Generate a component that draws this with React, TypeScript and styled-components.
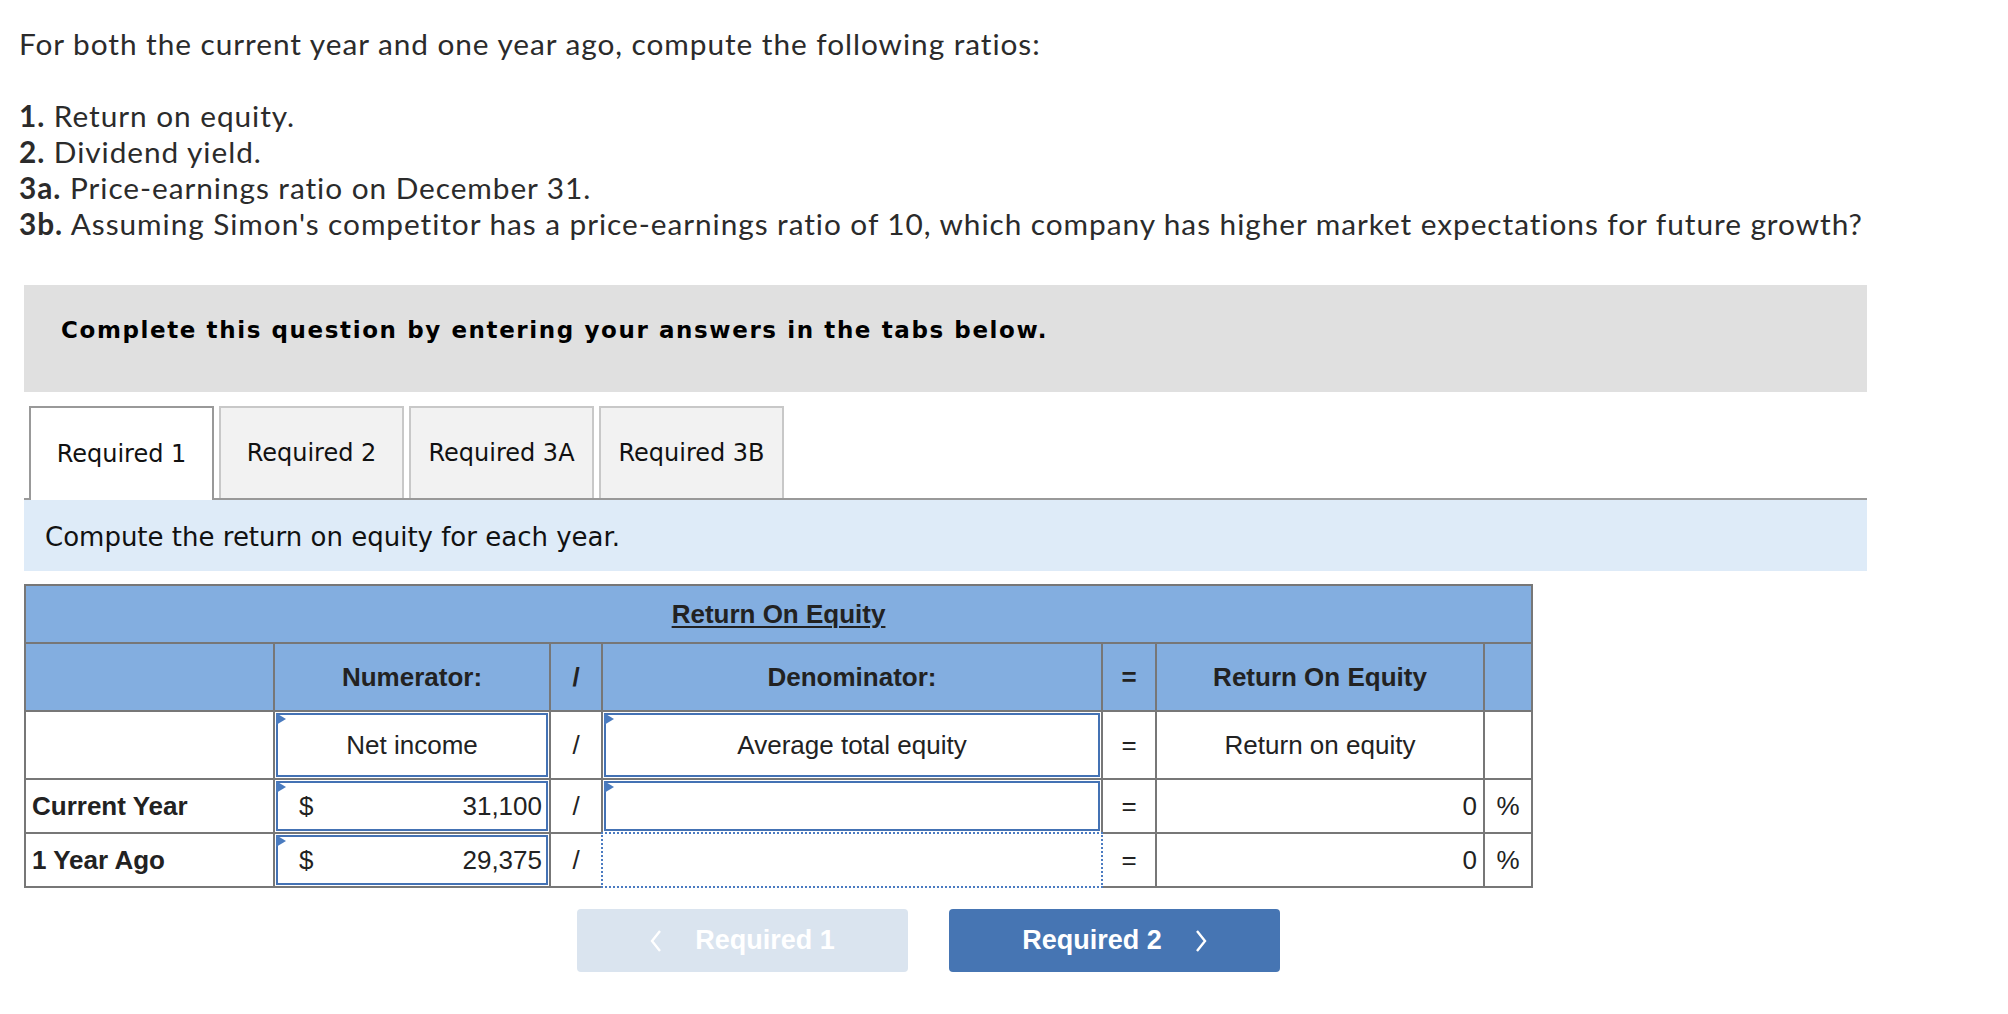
import styled, { createGlobalStyle } from 'styled-components'

const GlobalStyle = createGlobalStyle`
  html, body {
    margin: 0;
    padding: 0;
    background: #fff;
  }
  body {
    font-family: Lato, "Liberation Sans", sans-serif;
  }
`

const BLUE_EDGE = '#4472b4'
const GRID_LINE = '#777'

const Page = styled.div`
  padding: 26px 0 40px 19px;
`

const Prompt = styled.div`
  font-family: Lato, "Liberation Sans", sans-serif;
  font-size: 29.8px;
  line-height: 36px;
  letter-spacing: 0.95px;
  color: #2b2b2b;
`

const PromptLine = styled.p`
  margin: 0;
`

const Steps = styled.ol`
  list-style: none;
  margin: 36px 0 0;
  padding: 0;
`

const StepNo = styled.b`
  font-weight: 700;
`

const Work = styled.div`
  margin: 43px 0 0 5px;
  width: 1843px;
`

const Banner = styled.div`
  box-sizing: border-box;
  height: 107px;
  padding: 31px 37px 0;
  background: #e0e0e0;
  font: bold 23px/28px "DejaVu Sans", Verdana, sans-serif;
  letter-spacing: 1.6px;
  color: #000;
`

const TabBar = styled.div`
  display: flex;
  align-items: flex-start;
  gap: 5px;
  height: 92px;
  margin-top: 14px;
  padding-left: 5px;
  border-bottom: 2px solid #999;
`

const Tab = styled.button<{ $active?: boolean }>`
  box-sizing: border-box;
  width: 185px;
  height: ${(p) => (p.$active ? 94 : 92)}px;
  padding: 0;
  border: 2px solid ${(p) => (p.$active ? '#999' : '#c8c8c8')};
  border-bottom: none;
  background: ${(p) => (p.$active ? '#fff' : '#f2f2f2')};
  font: 24px "DejaVu Sans", Verdana, sans-serif;
  color: #111;
  cursor: pointer;
`

const Instruction = styled.div`
  box-sizing: border-box;
  height: 71px;
  padding: 22px 21px 0;
  background: #deebf8;
  font: 26px/30px "DejaVu Sans", Verdana, sans-serif;
  color: #111;
`

const Grid = styled.table`
  margin-top: 13px;
  border-collapse: collapse;
  table-layout: fixed;
  width: 1507px;
  font-family: "Liberation Sans", Arial, sans-serif;
  font-size: 26px;
  color: #222;
`

const Row = styled.tr<{ $h: number }>`
  height: ${(p) => p.$h}px;
`

const Cell = styled.td<{ $align?: 'left' | 'center' | 'right'; $head?: boolean; $bold?: boolean }>`
  position: relative;
  padding: 0 6px;
  border: 2px solid ${GRID_LINE};
  background: ${(p) => (p.$head ? '#83aee0' : '#fff')};
  text-align: ${(p) => p.$align ?? 'center'};
  font-weight: ${(p) => (p.$bold || p.$head ? 700 : 400)};
  vertical-align: middle;
  white-space: nowrap;
`

const InputCell = styled.td`
  position: relative;
  padding: 1px;
  border: 2px solid ${GRID_LINE};
  background: #fff;
  vertical-align: top;
`

const Title = styled.span`
  text-decoration: underline;
  text-underline-offset: 3px;
  text-decoration-thickness: 2px;
`

const Field = styled.div<{ $h: number; $align?: 'center' | 'split' }>`
  position: relative;
  box-sizing: border-box;
  height: ${(p) => p.$h}px;
  border: 2px solid ${BLUE_EDGE};
  display: flex;
  align-items: center;
  justify-content: ${(p) => (p.$align === 'split' ? 'space-between' : 'center')};
  padding: ${(p) => (p.$align === 'split' ? '0 4px 0 21px' : '0 8px')};
  white-space: nowrap;
`

const Flag = styled.span`
  position: absolute;
  top: -2px;
  left: -2px;
  width: 0;
  height: 0;
  border-top: 6.5px solid transparent;
  border-bottom: 6.5px solid transparent;
  border-left: 10px solid #4a7bbf;
`

const FocusRing = styled.div`
  position: absolute;
  top: -2px;
  right: -2px;
  bottom: -2px;
  left: -2px;
  border: 2px dotted #4b7bc1;
  background: #fff;
`

const Nav = styled.div`
  display: flex;
  justify-content: center;
  gap: 41px;
  margin-top: 21px;
  padding-right: 34px;
`

const NavButton = styled.button<{ $primary?: boolean }>`
  display: flex;
  align-items: center;
  justify-content: center;
  gap: 33px;
  width: 331px;
  height: 63px;
  padding: 0;
  border: none;
  border-radius: 4px;
  background: ${(p) => (p.$primary ? '#4675b3' : '#dae4ef')};
  color: #fff;
  font: bold 27px "Liberation Sans", Arial, sans-serif;
  cursor: ${(p) => (p.$primary ? 'pointer' : 'default')};
`

function Chevron({ dir }: { dir: 'left' | 'right' }) {
  const pts = dir === 'left' ? '10,1 2,11 10,21' : '2,1 10,11 2,21'
  return (
    <svg width="12" height="22" viewBox="0 0 12 22">
      <polyline points={pts} fill="none" stroke="#fff" strokeWidth="2.4" />
    </svg>
  )
}

const tabs = ['Required 1', 'Required 2', 'Required 3A', 'Required 3B']

const years = [
  { label: 'Current Year', net: '31,100', focus: false },
  { label: '1 Year Ago', net: '29,375', focus: true },
]

export default function App() {
  return (
    <>
      <GlobalStyle />
      <Page>
        <Prompt>
          <PromptLine>For both the current year and one year ago, compute the following ratios:</PromptLine>
          <Steps>
            <li>
              <StepNo>1.</StepNo> Return on equity.
            </li>
            <li>
              <StepNo>2.</StepNo> Dividend yield.
            </li>
            <li>
              <StepNo>3a.</StepNo> Price-earnings ratio on December 31.
            </li>
            <li>
              <StepNo>3b.</StepNo> Assuming Simon's competitor has a price-earnings ratio of 10, which company has
              higher market expectations for future growth?
            </li>
          </Steps>
        </Prompt>

        <Work>
          <Banner>Complete this question by entering your answers in the tabs below.</Banner>

          <TabBar>
            {tabs.map((t, i) => (
              <Tab key={t} $active={i === 0}>
                {t}
              </Tab>
            ))}
          </TabBar>

          <Instruction>Compute the return on equity for each year.</Instruction>

          <Grid>
            <colgroup>
              <col style={{ width: 249 }} />
              <col style={{ width: 276 }} />
              <col style={{ width: 52 }} />
              <col style={{ width: 500 }} />
              <col style={{ width: 54 }} />
              <col style={{ width: 328 }} />
              <col style={{ width: 48 }} />
            </colgroup>
            <tbody>
              <Row $h={58}>
                <Cell $head colSpan={7}>
                  <Title>Return On Equity</Title>
                </Cell>
              </Row>
              <Row $h={68}>
                <Cell $head />
                <Cell $head>Numerator:</Cell>
                <Cell $head>/</Cell>
                <Cell $head>Denominator:</Cell>
                <Cell $head>=</Cell>
                <Cell $head>Return On Equity</Cell>
                <Cell $head />
              </Row>
              <Row $h={68}>
                <Cell />
                <InputCell>
                  <Field $h={64}>
                    <Flag />
                    Net income
                  </Field>
                </InputCell>
                <Cell>/</Cell>
                <InputCell>
                  <Field $h={64}>
                    <Flag />
                    Average total equity
                  </Field>
                </InputCell>
                <Cell>=</Cell>
                <Cell>Return on equity</Cell>
                <Cell />
              </Row>
              {years.map((y) => (
                <Row $h={54} key={y.label}>
                  <Cell $align="left" $bold>
                    {y.label}
                  </Cell>
                  <InputCell>
                    <Field $h={50} $align="split">
                      <Flag />
                      <span>$</span>
                      <span>{y.net}</span>
                    </Field>
                  </InputCell>
                  <Cell>/</Cell>
                  <InputCell>
                    {y.focus ? (
                      <FocusRing />
                    ) : (
                      <Field $h={50}>
                        <Flag />
                      </Field>
                    )}
                  </InputCell>
                  <Cell>=</Cell>
                  <Cell $align="right">0</Cell>
                  <Cell>%</Cell>
                </Row>
              ))}
            </tbody>
          </Grid>

          <Nav>
            <NavButton disabled>
              <Chevron dir="left" />
              Required 1
            </NavButton>
            <NavButton $primary>
              Required 2
              <Chevron dir="right" />
            </NavButton>
          </Nav>
        </Work>
      </Page>
    </>
  )
}
